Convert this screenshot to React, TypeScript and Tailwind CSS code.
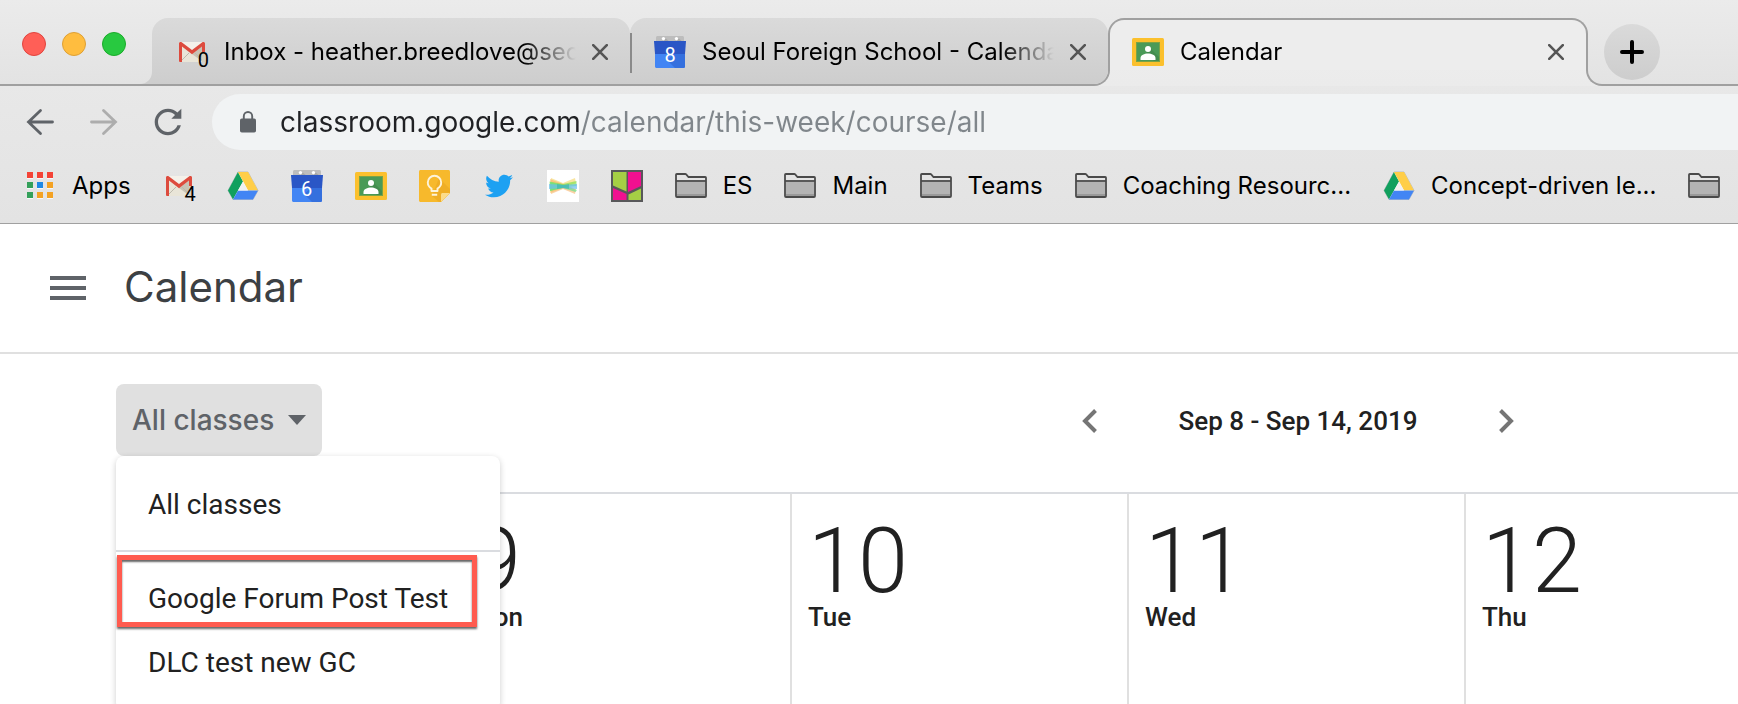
import type { ReactNode } from "react";
import { FaTwitter } from "react-icons/fa";

interface TabProps {
  icon: ReactNode;
  title: string;
}

interface Bookmark {
  icon: ReactNode;
  name: string;
  label?: string;
}

const days = [
  { date: 9, name: "Mon" },
  { date: 10, name: "Tue" },
  { date: 11, name: "Wed" },
  { date: 12, name: "Thu" },
];

const classes = ["Google Forum Post Test", "DLC test new GC"];

const bookmarks: Bookmark[] = [
  { icon: <AppsIcon />, name: "Apps", label: "Apps" },
  { icon: <GmailIcon count={4} />, name: "Gmail" },
  { icon: <DriveIcon />, name: "Google Drive" },
  { icon: <CalendarIcon day={6} />, name: "Google Calendar" },
  { icon: <ClassroomIcon />, name: "Google Classroom" },
  { icon: <KeepIcon />, name: "Google Keep" },
  { icon: <FaTwitter className="size-7 text-[#1da1f2]" />, name: "Twitter" },
  { icon: <SeesawIcon />, name: "Seesaw" },
  { icon: <PanesIcon />, name: "Panes" },
  { icon: <FolderIcon />, name: "ES", label: "ES" },
  { icon: <FolderIcon />, name: "Main", label: "Main" },
  { icon: <FolderIcon />, name: "Teams", label: "Teams" },
  {
    icon: <FolderIcon />,
    name: "Coaching Resources",
    label: "Coaching Resourc...",
  },
  {
    icon: <DriveIcon />,
    name: "Concept-driven learning",
    label: "Concept-driven le...",
  },
  { icon: <FolderIcon />, name: "More bookmarks" },
];

function AppsIcon() {
  const colors = [
    "#f44336",
    "#f44336",
    "#f44336",
    "#34a05a",
    "#1e88e5",
    "#f4a223",
    "#34a05a",
    "#f4a223",
    "#f4a223",
  ];
  return (
    <svg viewBox="0 0 32 32" className="size-8">
      {colors.map((color, i) => (
        <g key={i}>
          <rect
            x={3 + (i % 3) * 10}
            y={3 + Math.floor(i / 3) * 10}
            width="6"
            height="6"
            fill="#f8f8f8"
          />
          <rect
            x={3 + (i % 3) * 10}
            y={2 + Math.floor(i / 3) * 10}
            width="6"
            height="6"
            fill={color}
          />
        </g>
      ))}
    </svg>
  );
}

function GmailIcon({ count }: { count: number }) {
  return (
    <span className="relative block size-8">
      <svg viewBox="0 0 32 32" className="size-8">
        <rect x="3" y="6" width="26" height="20" rx="1" fill="#e9e5d8" />
        <path d="M29 8L16 18l11 8h2z" fill="#b9b5a8" opacity=".7" />
        <path
          d="M5 25l8-8M27 25l-8-8"
          stroke="#bdb9ac"
          strokeWidth="1"
          fill="none"
        />
        <path d="M4 6h24L16 15.5z" fill="#f4f1ea" />
        <path
          d="M3 25V7.5C3 6 4.8 5.600 6 6.500L16 14l10-7.500C27.200 5.600 29 6 29 7.500V16h-3v-5.500L16 18.300 6 10.500V26H4a1 1 0 0 1-1-1z"
          fill="#dd4b3e"
        />
        <path d="M26 16h3v9a1 1 0 0 1-1 1h-2z" fill="#d5d0c2" />
      </svg>
      <span className="absolute -right-px -bottom-1 font-['Roboto',sans-serif] text-xl leading-6 text-black">
        {count}
      </span>
    </span>
  );
}

function DriveIcon() {
  return (
    <svg viewBox="0 0 32 32" className="size-8">
      <path
        d="M11 2h10l10 18.500-5 9H6l-5-9z"
        fill="#fff"
        stroke="#9aa0a6"
        strokeWidth=".6"
      />
      <path d="M11 2l5 9.500L6 29.500l-5-9z" fill="#11a05e" />
      <path d="M11 2h10l10 18.500H21z" fill="#ffce48" />
      <path d="M11 20.500h20l-5 9H6z" fill="#4285f4" />
      <path d="M16 11.500l5 9H11z" fill="#f1f1f1" />
    </svg>
  );
}

function CalendarIcon({ day }: { day: number }) {
  return (
    <span className="relative flex size-8 items-center justify-center">
      <svg viewBox="0 0 32 32" className="absolute inset-0 size-8">
        <path d="M2 1.500C2 .700 2.700 0 3.500 0h25c.8 0 1.500.700 1.500 1.500V6H2z" fill="#bdbdbd" />
        <path d="M9 3l3 3h4l-6-5zM22 3l3 3h4l-6-5z" fill="#a8a8a8" />
        <circle cx="9.500" cy="2.600" r="1.700" fill="#fff" />
        <circle cx="22.500" cy="2.600" r="1.700" fill="#fff" />
        <path d="M0 5h32l-1 13H1z" fill="#2a56c6" />
        <path d="M1 18h30v12.500c0 .8-.7 1.500-1.500 1.500h-27C1.700 32 1 31.300 1 30.500z" fill="#4285f4" />
        <path d="M20 18h11v12.500c0 .8-.7 1.500-1.500 1.500H21l-8-8z" fill="#3570de" />
      </svg>
      <span className="relative pt-1.5 font-['Roboto',sans-serif] text-xl leading-6 text-white">
        {day}
      </span>
    </span>
  );
}

function ClassroomIcon() {
  return (
    <svg viewBox="0 0 32 32" className="size-8">
      <rect y="2" width="32" height="28" rx="1.500" fill="#fbc02d" />
      <rect x="4" y="6" width="24" height="20" fill="#7aa345" />
      <rect x="5" y="7" width="22" height="18" fill="#4a9a57" />
      <path d="M19 13l8 8v4h-5l-8-8z" fill="#438c4f" />
      <circle cx="16" cy="13" r="3" fill="#fff" />
      <path d="M8.500 24v-2c0-2.800 4-4.500 7.500-4.500s7.500 1.700 7.500 4.500v2z" fill="#fff" />
    </svg>
  );
}

function KeepIcon() {
  return (
    <svg viewBox="0 0 32 32" className="size-8">
      <path d="M1.500 0h28c.8 0 1.500.700 1.500 1.500V23l-9 9H1.500C.7 32 0 31.300 0 30.500v-29C0 .700.7 0 1.500 0z" fill="#f7b92c" />
      <path d="M20 8l11 11v4l-9 9h-2l-7-6z" fill="#efae25" />
      <path d="M31 23l-9 9v-7.500c0-.8.7-1.500 1.500-1.500z" fill="#fbdc8b" />
      <path
        d="M12.500 21v-2.500C10 17 8.800 15 8.800 12.500a6.700 6.700 0 0 1 13.400 0c0 2.500-1.200 4.500-3.700 6V21zM12.800 24.800h5.400"
        fill="none"
        stroke="#fdf3da"
        strokeWidth="1.900"
        strokeLinejoin="round"
      />
    </svg>
  );
}

function SeesawIcon() {
  return (
    <svg viewBox="0 0 32 32" className="size-8">
      <rect width="32" height="32" fill="#fff" />
      <path d="M4 8l12 5 12-5 1 5-26 10z" fill="#f5d76e" opacity=".65" />
      <path d="M4 24l12-5 12 5 1-5L3 9z" fill="#f7b267" opacity=".6" />
      <path d="M2.500 11.500L16 14l13.500-3v5L16 17.500 3 21z" fill="#7be04f" opacity=".65" />
      <path d="M3 12l13 3 14 5-1.500 2L16 18l-13 3z" fill="#5fe38c" opacity=".65" />
      <path d="M2 14l14 1 14-1v5l-14-1-14 1z" fill="#68bdf0" opacity=".7" />
      <path d="M10 14l6 1 6-1v5l-6-1-6 1z" fill="#35b8a5" opacity=".6" />
    </svg>
  );
}

function PanesIcon() {
  return (
    <svg viewBox="0 0 32 32" className="size-8">
      <rect width="32" height="32" fill="#58585a" />
      <path d="M2 2h13.500v19.500L2 15.500z" fill="#a5cf45" />
      <path d="M17 2h13v14l-13 6z" fill="#f01090" />
      <path d="M2 18l13.500 6v6H2z" fill="#f01090" />
      <path d="M17.500 24.500L30 18.500V30H17.500z" fill="#a5cf45" />
    </svg>
  );
}

function FolderIcon() {
  return (
    <svg viewBox="0 0 32 32" className="size-8">
      <path
        d="M1 26V4.800C1 4.300 1.300 4 1.800 4h8.400c.4 0 .7.100 1 .4l2.300 2.600h16.700c.5 0 .8.300.8.8V26c0 .6-.4 1-1 1H2c-.6 0-1-.4-1-1z"
        fill="#e4e4e4"
        stroke="#4a4a4a"
        strokeWidth="1.800"
      />
      <path d="M2 12h28v14H2z" fill="#b4b4b4" />
      <path d="M2 24h28v2H2z" fill="#9a9a9a" />
      <path d="M1 11h30" stroke="#4a4a4a" strokeWidth="1.800" />
    </svg>
  );
}

function CloseIcon() {
  return (
    <svg viewBox="0 0 16 16" className="size-4">
      <path
        d="M1.200 1.200l13.600 13.600M14.800 1.200L1.200 14.800"
        stroke="#555"
        strokeWidth="2.600"
        strokeLinecap="round"
      />
    </svg>
  );
}

function ArrowIcon() {
  return (
    <svg viewBox="0 0 32 32" className="size-8">
      <path
        d="M28.500 16H4.500M16.500 4.500L4.500 16l12 11.500"
        fill="none"
        stroke="currentColor"
        strokeWidth="2.800"
        strokeLinecap="round"
      />
    </svg>
  );
}

function TabContent({ icon, title }: TabProps) {
  return (
    <>
      <span className="shrink-0">{icon}</span>
      <span className="ml-4 flex-1 overflow-hidden text-2xl whitespace-nowrap text-black [mask-image:linear-gradient(to_right,black_85%,transparent)]">
        {title}
      </span>
      <button aria-label={`Close ${title}`} className="ml-4 shrink-0">
        <CloseIcon />
      </button>
    </>
  );
}

function InactiveTab({ icon, title }: TabProps) {
  return (
    <div className="flex h-[68px] w-[478px] items-center rounded-t-2xl bg-linear-to-b from-[#dadada] to-[#cdcdcd] pr-[22px] pl-6">
      <TabContent icon={icon} title={title} />
    </div>
  );
}

function TabStrip() {
  return (
    <div className="flex h-[86px] bg-linear-to-b from-[#efefef] to-[#ebebeb]">
      <div className="flex shrink-0 items-end overflow-hidden rounded-br-2xl border-r-2 border-b-2 border-[#a0a0a0] bg-linear-to-b from-[#ebebeb] to-[#e3e3e3]">
        <div className="h-full bg-[#cecece]">
          <div className="flex h-full w-[152px] items-center gap-4 rounded-br-xl bg-linear-to-b from-[#ebebeb] to-[#e3e3e3] pt-1 pl-[22px]">
            <button
              aria-label="Close window"
              className="size-6 rounded-full border border-[#e0443e] bg-[#ff5f57]"
            />
            <button
              aria-label="Minimize window"
              className="size-6 rounded-full border border-[#dea035] bg-[#ffbd3f]"
            />
            <button
              aria-label="Zoom window"
              className="size-6 rounded-full border border-[#1aab29] bg-[#28c940]"
            />
          </div>
        </div>
        <div className="-mb-0.5">
          <InactiveTab
            icon={<GmailIcon count={0} />}
            title="Inbox - heather.breedlove@seo"
          />
        </div>
        <div className="relative -mb-0.5">
          <InactiveTab
            icon={<CalendarIcon day={8} />}
            title="Seoul Foreign School - Calendar"
          />
          <span className="absolute top-[15px] left-0 h-10 w-0.5 bg-[#8a8a8a]" />
        </div>
      </div>
      <div className="relative z-10 -mx-0.5 h-[86px] w-[480px] shrink-0 pt-[18px]">
        <div className="absolute inset-x-0 top-0 h-[34px] bg-linear-to-b from-[#ebebeb] to-[#e8e8e8]" />
        <div className="relative h-[52px] rounded-t-2xl border-2 border-b-0 border-[#a0a0a0] bg-[#ededed]">
          <div className="flex h-16 items-center pr-[22px] pl-[22px]">
            <TabContent icon={<ClassroomIcon />} title="Calendar" />
          </div>
        </div>
      </div>
      <div className="flex-1 rounded-bl-2xl border-b-2 border-l-2 border-[#a0a0a0] bg-linear-to-b from-[#ebebeb] to-[#e3e3e3] pt-6 pl-4">
        <button
          aria-label="New tab"
          className="flex size-14 items-center justify-center rounded-full bg-linear-to-b from-[#dadada] to-[#cdcdcd]"
        >
          <svg viewBox="0 0 24 24" className="size-6">
            <path
              d="M12 2v20M2 12h20"
              stroke="#000"
              strokeWidth="4"
              strokeLinecap="round"
            />
          </svg>
        </button>
      </div>
    </div>
  );
}

function Toolbar() {
  return (
    <div className="flex items-center pt-2 pl-6 text-[#5f6368]">
      <button aria-label="Back" className="mr-8">
        <ArrowIcon />
      </button>
      <button aria-label="Forward" className="mr-7 rotate-180 text-[#adadad]">
        <ArrowIcon />
      </button>
      <button aria-label="Reload" className="mr-6">
        <svg viewBox="0 0 24 24" className="size-10" fill="currentColor">
          <path d="M17.650 6.350C16.200 4.900 14.210 4 12 4c-4.420 0-7.990 3.580-7.990 8s3.570 8 7.990 8c3.730 0 6.840-2.550 7.730-6h-2.080c-.82 2.330-3.040 4-5.650 4-3.310 0-6-2.690-6-6s2.690-6 6-6c1.660 0 3.140.690 4.220 1.780L14 10h6V4z" />
        </svg>
      </button>
      <label className="flex h-14 flex-1 items-center rounded-l-full bg-[#f1f3f4] pl-7">
        <svg viewBox="0 0 16 22" className="h-[22px] w-4 shrink-0">
          <rect y="7.500" width="16" height="14" rx="1.800" fill="#5f6368" />
          <path
            d="M3.800 8V5.200a4.200 4.200 0 0 1 8.400 0V8"
            fill="none"
            stroke="#5f6368"
            strokeWidth="1.900"
          />
        </svg>
        <input
          aria-label="Address"
          defaultValue="classroom.google.com/calendar/this-week/course/all"
          className="ml-6 h-14 flex-1 bg-[linear-gradient(to_right,#202124_301px,#80868b_301px)] bg-clip-text text-[28px] text-transparent outline-none"
        />
      </label>
    </div>
  );
}

function BookmarkBar() {
  return (
    <nav
      aria-label="Bookmarks"
      className="flex h-[73px] items-center gap-8 overflow-hidden pb-0.5 pl-6"
    >
      {bookmarks.map(({ icon, name, label }) => (
        <a
          key={name}
          href="#"
          aria-label={name}
          className="flex shrink-0 items-center gap-4 text-2xl text-black"
        >
          <span className="flex size-8 items-center justify-center">
            {icon}
          </span>
          {label}
        </a>
      ))}
    </nav>
  );
}

function ClassMenu() {
  return (
    <div className="relative z-10">
      <button
        aria-haspopup="menu"
        aria-expanded="true"
        className="flex h-[72px] items-center rounded-lg bg-[#e0e0e0] px-4 font-['Inter',sans-serif] text-[28px] font-medium text-[#5f6368]"
      >
        All classes
        <svg viewBox="0 0 18 10" className="ml-3.5 h-2.5 w-[18px]">
          <path d="M0 0h18l-9 10z" fill="#5f6368" />
        </svg>
      </button>
      <div
        role="menu"
        className="absolute top-full left-0 w-96 rounded-lg bg-white pb-4 text-[28px] text-[#212121] shadow-[0_2px_6px_rgba(0,0,0,0.2)]"
      >
        <div className="border-b-2 border-[#dadce0] pt-4 pb-3.5">
          <button role="menuitem" className="h-16 w-full pt-0.5 pl-8 text-left">
            All classes
          </button>
        </div>
        <div className="pt-3.5">
          {classes.map((name) => (
            <button
              key={name}
              role="menuitem"
              className="block h-16 w-full pt-0.5 pl-8 text-left"
            >
              {name}
            </button>
          ))}
        </div>
        <div className="pointer-events-none absolute top-[99px] left-px h-[72px] w-[360px] border-5 border-[#ff5b4f] shadow-[0_2px_2px_rgba(0,0,0,0.6),inset_0_2px_2px_rgba(0,0,0,0.6)]" />
      </div>
    </div>
  );
}

function WeekNav() {
  return (
    <div className="flex w-[464px] items-center justify-between pt-0.5 text-[#757575]">
      <button
        aria-label="Previous week"
        className="flex size-12 items-center justify-center"
      >
        <svg viewBox="0 0 16 24" className="h-6 w-4">
          <path
            d="M13.500 1.500L3 12l10.500 10.500"
            fill="none"
            stroke="currentColor"
            strokeWidth="4"
          />
        </svg>
      </button>
      <h2 className="text-[26px] font-medium text-[#212121]">
        Sep 8 - Sep 14, 2019
      </h2>
      <button
        aria-label="Next week"
        className="flex size-12 items-center justify-center"
      >
        <svg viewBox="0 0 16 24" className="h-6 w-4">
          <path
            d="M2.500 1.500L13 12 2.500 22.500"
            fill="none"
            stroke="currentColor"
            strokeWidth="4"
          />
        </svg>
      </button>
    </div>
  );
}

export default function App() {
  return (
    <div className="flex h-screen flex-col overflow-hidden bg-white font-['Roboto',sans-serif]">
      <div className="border-b border-[#a0a0a0] bg-linear-to-b from-[#ebebeb] to-[#e3e3e3] font-['Inter',sans-serif]">
        <TabStrip />
        <Toolbar />
        <BookmarkBar />
      </div>

      <header className="flex h-[130px] shrink-0 items-center border-b-2 border-[#e0e0e0] pl-[50px]">
        <button aria-label="Main menu" className="flex w-9 flex-col gap-1.5">
          <span className="h-1 bg-[#5f6368]" />
          <span className="h-1 bg-[#5f6368]" />
          <span className="h-1 bg-[#5f6368]" />
        </button>
        <h1 className="ml-[38px] pb-1 font-['Inter',sans-serif] text-[42px] text-[#3c4043]">
          Calendar
        </h1>
      </header>

      <main className="flex flex-1 flex-col">
        <div className="flex h-[138px] shrink-0 items-center justify-between pr-52 pb-1.5 pl-[116px]">
          <ClassMenu />
          <WeekNav />
        </div>
        <div className="ml-[118px] flex flex-1 overflow-hidden border-t-2 border-[#dadce0]">
          <div className="w-[337px] shrink-0 border-r-2 border-[#e0e0e0]" />
          {days.map(({ date, name }) => (
            <section
              key={name}
              className="w-[337px] shrink-0 border-r-2 border-[#e0e0e0] pt-7 pl-4 text-[#212121]"
            >
              <div className="text-[90px] leading-[80px] font-light">
                {date}
              </div>
              <div className="text-[26px] leading-[30px] font-medium">
                {name}
              </div>
            </section>
          ))}
        </div>
      </main>
    </div>
  );
}
